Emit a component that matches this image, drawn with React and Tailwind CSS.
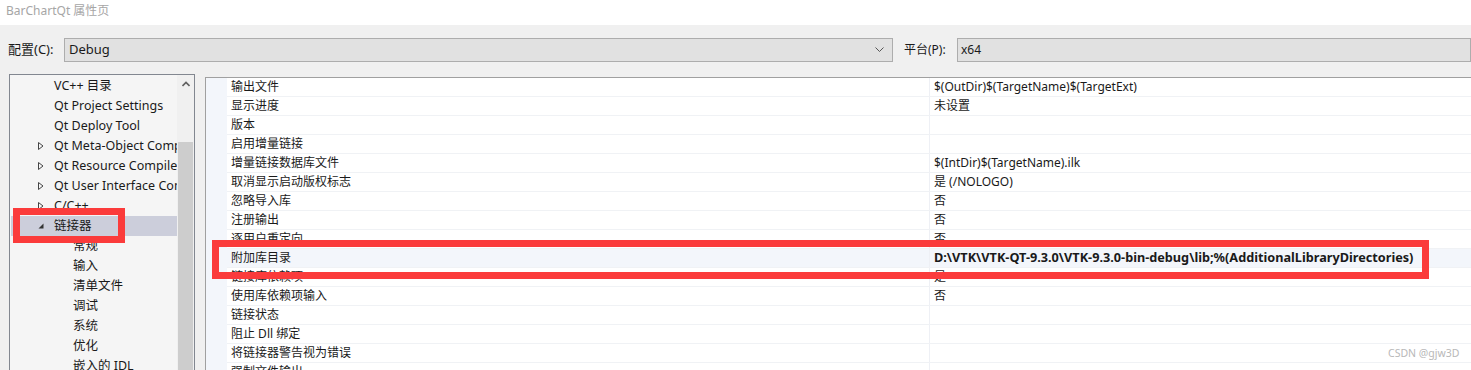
import React from "react";

const FONT = { fontFamily: '"Noto Sans", "Noto Sans CJK SC", sans-serif' };

const tree = [
  { t: "VC++ 目录", lvl: 0 },
  { t: "Qt Project Settings", lvl: 0 },
  { t: "Qt Deploy Tool", lvl: 0 },
  { t: "Qt Meta-Object Compiler", lvl: 0, arrow: "c" },
  { t: "Qt Resource Compiler", lvl: 0, arrow: "c" },
  { t: "Qt User Interface Compiler", lvl: 0, arrow: "c" },
  { t: "C/C++", lvl: 0, arrow: "c" },
  { t: "链接器", lvl: 0, arrow: "e", sel: true },
  { t: "常规", lvl: 1 },
  { t: "输入", lvl: 1 },
  { t: "清单文件", lvl: 1 },
  { t: "调试", lvl: 1 },
  { t: "系统", lvl: 1 },
  { t: "优化", lvl: 1 },
  { t: "嵌入的 IDL", lvl: 1 },
];

const rows = [
  ["输出文件", "$(OutDir)$(TargetName)$(TargetExt)"],
  ["显示进度", "未设置"],
  ["版本", ""],
  ["启用增量链接", ""],
  ["增量链接数据库文件", "$(IntDir)$(TargetName).ilk"],
  ["取消显示启动版权标志", "是 (/NOLOGO)"],
  ["忽略导入库", "否"],
  ["注册输出", "否"],
  ["逐用户重定向", "否"],
  ["附加库目录", "D:\\VTK\\VTK-QT-9.3.0\\VTK-9.3.0-bin-debug\\lib;%(AdditionalLibraryDirectories)", true],
  ["链接库依赖项", "是"],
  ["使用库依赖项输入", "否"],
  ["链接状态", ""],
  ["阻止 Dll 绑定", ""],
  ["将链接器警告视为错误", ""],
  ["强制文件输出", ""],
];

function Arrow({ kind }) {
  if (kind === "c")
    return (
      <svg width="8" height="10" viewBox="0 0 8 10" className="shrink-0">
        <path d="M1.5 1.5 L6 5 L1.5 8.5 Z" fill="none" stroke="#444" strokeWidth="1" />
      </svg>
    );
  if (kind === "e")
    return (
      <svg width="8" height="10" viewBox="0 0 8 10" className="shrink-0">
        <path d="M6.5 2.5 L6.5 7.5 L1.5 7.5 Z" fill="#333" />
      </svg>
    );
  return <span className="w-[8px] shrink-0" />;
}

export default function App() {
  return (
    <div className="relative h-[370px] w-full overflow-hidden bg-[#f0f0f0] text-[12px] text-[#1a1a1a]" style={FONT}>
      {/* title bar */}
      <div className="flex h-[25px] items-center bg-white pb-[4px] pl-[6px] text-[12px] text-[#a6a6a6]">
        BarChartQt 属性页
      </div>

      {/* config row */}
      <div className="mt-[13px] flex h-[24px] items-center">
        <div className="w-[64px] shrink-0 pl-[8px] text-[13px]">配置(C):</div>
        <div className="flex h-[24px] w-[829px] shrink-0 items-center justify-between border border-[#adadad] bg-[#e1e1e1] pl-[4px] pr-[8px] text-[13px]">
          <span>Debug</span>
          <svg width="9" height="6" viewBox="0 0 9 6">
            <path d="M0.5 0.5 L4.5 4.5 L8.5 0.5" fill="none" stroke="#555" strokeWidth="1" />
          </svg>
        </div>
        <div className="w-[64px] shrink-0 whitespace-nowrap pl-[11px] text-[12px]">平台(P):</div>
        <div className="flex h-[24px] flex-1 items-center border border-[#adadad] bg-[#e1e1e1] pl-[3px] text-[12px]">
          x64
        </div>
      </div>

      {/* main area */}
      <div className="mt-[12px] flex">
        {/* tree */}
        <div className="ml-[9px] flex h-[320px] w-[186px] shrink-0 border border-[#828790] bg-[#f5f5f5]">
          <div className="min-w-0 flex-1 overflow-hidden pl-[1px] pt-[1px]">
            {tree.map((r, i) => (
              <div
                key={i}
                className={`flex h-[20px] items-center overflow-hidden whitespace-nowrap text-[12.5px] ${r.sel ? "bg-[#cccedb]" : ""}`}
              >
                <div className={`flex items-center ${r.lvl ? "pl-[62px]" : "pl-[26px]"}`}>
                  {r.lvl === 0 && <Arrow kind={r.arrow} />}
                  <span className={r.lvl === 0 ? "ml-[9px]" : ""}>{r.t}</span>
                </div>
              </div>
            ))}
          </div>
          <div className="flex w-[17px] shrink-0 flex-col bg-[#f0f0f0] pl-[1px]">
            <div className="flex h-[18px] items-center justify-center">
              <svg width="8" height="6" viewBox="0 0 8 6">
                <path d="M0.5 5 L4 1.5 L7.5 5" fill="none" stroke="#606060" strokeWidth="1.6" />
              </svg>
            </div>
            <div className="mt-[50px] h-[260px] w-[15px] bg-[#cdcdcd]" />
          </div>
        </div>

        {/* grid */}
        <div className="ml-[10px] mt-[3px] flex h-[320px] min-w-0 flex-1 border-l border-t border-[#a0a0a0] bg-white">
          <div className="w-[21px] shrink-0 bg-[#f3f6fb]" />
          <div className="min-w-0 flex-1">
            {rows.map(([n, v, sel], i) => (
              <div key={i} className={`flex h-[19px] border-b border-[#f0f2f5] ${sel ? "bg-[#f3f6fb]" : ""}`}>
                <div className="flex w-[703px] shrink-0 items-center border-r border-[#eef0f5] pl-[4px] text-[12px]">{n}</div>
                <div className={`flex flex-1 items-center whitespace-nowrap pl-[4px] ${sel ? "text-[12.7px] font-bold" : "text-[12px]"}`}>{v}</div>
              </div>
            ))}
          </div>
        </div>
      </div>

      {/* annotations */}
      <div className="absolute left-[13px] top-[208px] h-[35px] w-[112px] border-[7px] border-[#fb3b3b]" />
      <div className="absolute left-[212px] top-[240px] h-[39px] w-[1217px] border-[7px] border-[#fb3b3b]" />
      <div className="absolute left-[1388px] top-[346px] text-[10.5px] text-[#b8b8b8]">CSDN @gjw3D</div>
    </div>
  );
}
